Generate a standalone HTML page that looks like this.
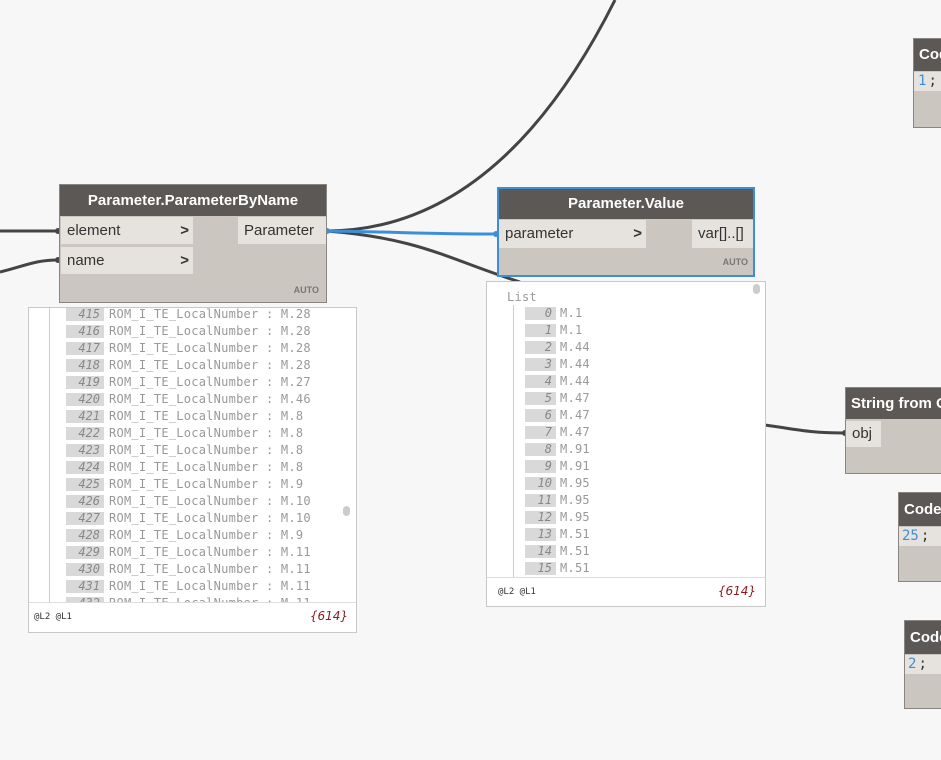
<!DOCTYPE html>
<html><head><style>
body{margin:0;width:941px;height:760px;background:#f7f7f7;position:relative;overflow:hidden;font-family:"Liberation Sans","DejaVu Sans",sans-serif}
.a{position:absolute}
.node{position:absolute;background:#cbc6bf;border:1px solid #8a8580;box-sizing:border-box}
.hd{position:absolute;left:0;right:0;top:0;background:#5b5856;color:#fff;font-weight:bold;font-size:15px;text-align:center;white-space:nowrap;overflow:hidden}
.port{position:absolute;background:#e6e3de;color:#333;font-size:15px;box-sizing:border-box;padding-left:6px;white-space:nowrap}
.chev{position:absolute;right:4px;top:0;font-weight:bold;color:#333}
.auto{position:absolute;right:7px;bottom:7px;font-size:9px;font-weight:bold;color:#777}
.pv{position:absolute;background:#fff;border:1px solid #c8c8c8;box-sizing:border-box;font-family:"DejaVu Sans Mono","Liberation Mono",monospace;font-size:12px;color:#999;overflow:hidden}
.clip{position:absolute;left:0;top:0;right:0;overflow:hidden}
.row{position:absolute;height:17px;line-height:17px;white-space:pre;letter-spacing:0.25px}
.num{display:inline-block;background:#d9d9d9;color:#888;font-style:italic;text-align:right;padding-right:4px;box-sizing:border-box;height:13px;line-height:13px;vertical-align:middle;letter-spacing:0;margin-right:5px}
.ft{position:absolute;font-size:9px;color:#333}
.cnt{position:absolute;font-style:italic;color:#8b1a1a;font-size:12px;font-family:"DejaVu Sans",sans-serif}
.cd{font-family:'DejaVu Sans Mono',monospace;font-size:14px}
</style></head><body>
<svg class="a" style="left:0;top:0" width="941" height="760">
<path d="M0 231 L58 231" stroke="#444" stroke-width="3" fill="none"/>
<path d="M0 272 C25 266 35 260 58 260" stroke="#444" stroke-width="3" fill="none"/>
<path d="M326 231 C470 231 560 110 615 0" stroke="#444" stroke-width="3" fill="none"/>
<path d="M326 231 C420 238 450 260 520 282" stroke="#444" stroke-width="3" fill="none"/>
<path d="M326 231 C400 232 430 234 496 234" stroke="#3b8fd8" stroke-width="3" fill="none"/>
<path d="M765 425 C800 430 810 433 845 433" stroke="#444" stroke-width="3" fill="none"/>
<circle cx="58" cy="231" r="3" fill="#444"/><circle cx="58" cy="260" r="3" fill="#444"/>
<circle cx="327" cy="231" r="3" fill="#3b8fd8"/><circle cx="496" cy="234" r="3" fill="#3b8fd8"/>
<circle cx="845" cy="433" r="3" fill="#444"/>
</svg>

<div class="node" style="left:59px;top:184px;width:268px;height:119px">
<div class="hd" style="height:31px;line-height:31px">Parameter.ParameterByName</div>
<div class="port" style="left:1px;top:32px;width:132px;height:27px;line-height:27px">element<span class="chev">&gt;</span></div>
<div class="port" style="left:1px;top:62px;width:132px;height:27px;line-height:27px">name<span class="chev">&gt;</span></div>
<div class="port" style="left:178px;top:32px;width:88px;height:27px;line-height:27px">Parameter</div>
<div class="auto">AUTO</div>
</div>

<div class="pv" style="left:28px;top:307px;width:329px;height:326px">
<div class="clip" style="height:294px">
<div class="a" style="left:20px;top:0;width:1px;height:294px;background:#ccc"></div>
<div id="l1"></div>
</div>
<div class="a" style="left:314px;top:198px;width:7px;height:10px;border-radius:4px;background:#ccc"></div>
<div class="a" style="left:0;top:294px;width:100%;height:1px;background:#ddd"></div>
<div class="ft" style="left:5px;top:304px">@L2 @L1</div>
<div class="cnt" style="right:8px;top:301px">{614}</div>
</div>

<div class="node" style="left:497px;top:187px;width:258px;height:90px;border:2px solid #3b8fd8">
<div class="hd" style="height:30px;line-height:30px">Parameter.Value</div>
<div class="port" style="left:0;top:31px;width:147px;height:28px;line-height:28px">parameter<span class="chev">&gt;</span></div>
<div class="port" style="left:193px;top:31px;width:61px;height:28px;line-height:28px">var[]..[]</div>
<div class="auto" style="bottom:8px;right:5px">AUTO</div>
</div>

<div class="pv" style="left:486px;top:281px;width:280px;height:326px">
<div class="row" style="left:20px;top:7px;color:#999">List</div>
<div class="a" style="left:26px;top:23px;width:1px;height:272px;background:#ccc"></div>
<div class="clip" style="height:295px"><div id="l2"></div></div>
<div class="a" style="left:266px;top:2px;width:7px;height:10px;border-radius:4px;background:#ccc"></div>
<div class="a" style="left:0;top:295px;width:100%;height:1px;background:#ddd"></div>
<div class="ft" style="left:11px;top:305px">@L2 @L1</div>
<div class="cnt" style="right:9px;top:302px">{614}</div>
</div>

<div class="node" style="left:913px;top:38px;width:40px;height:90px">
<div class="hd" style="height:32px;line-height:32px;text-align:left;padding-left:5px">Code</div>
<div class="port cd" style="left:0;top:33px;width:40px;height:19px;line-height:19px;padding-left:4px"><span style="color:#3b8fd8">1</span><span style="margin-left:2px">;</span></div>
</div>
<div class="node" style="left:845px;top:387px;width:110px;height:87px">
<div class="hd" style="height:31px;line-height:31px;text-align:left;padding-left:5px">String from O</div>
<div class="port" style="left:0;top:33px;width:35px;height:26px;line-height:26px">obj</div>
</div>
<div class="node" style="left:898px;top:492px;width:60px;height:90px">
<div class="hd" style="height:33px;line-height:33px;text-align:left;padding-left:5px">Code</div>
<div class="port cd" style="left:0;top:34px;width:60px;height:19px;line-height:19px;padding-left:3px"><span style="color:#3b8fd8">25</span><span style="margin-left:2px">;</span></div>
</div>
<div class="node" style="left:904px;top:620px;width:60px;height:89px">
<div class="hd" style="height:33px;line-height:33px;text-align:left;padding-left:5px">Code</div>
<div class="port cd" style="left:0;top:34px;width:60px;height:19px;line-height:19px;padding-left:3px"><span style="color:#3b8fd8">2</span><span style="margin-left:2px">;</span></div>
</div>

<script>
var v=["28","28","28","28","27","46","8","8","8","8","9","10","10","9","11","11","11","11"];
var h="";for(var i=0;i<18;i++){h+='<div class="row" style="left:37px;top:'+(-2+i*17)+'px"><span class="num" style="width:38px">'+(415+i)+'</span>ROM_I_TE_LocalNumber : M.'+v[i]+'</div>';}
document.getElementById("l1").outerHTML=h;
var w=["1","1","44","44","44","47","47","47","91","91","95","95","95","51","51","51"];
h="";for(var i=0;i<16;i++){h+='<div class="row" style="left:38px;top:'+(23+i*17)+'px"><span class="num" style="width:31px;margin-right:4px">'+i+'</span>M.'+w[i]+'</div>';}
document.getElementById("l2").outerHTML=h;
</script>
</body></html>
